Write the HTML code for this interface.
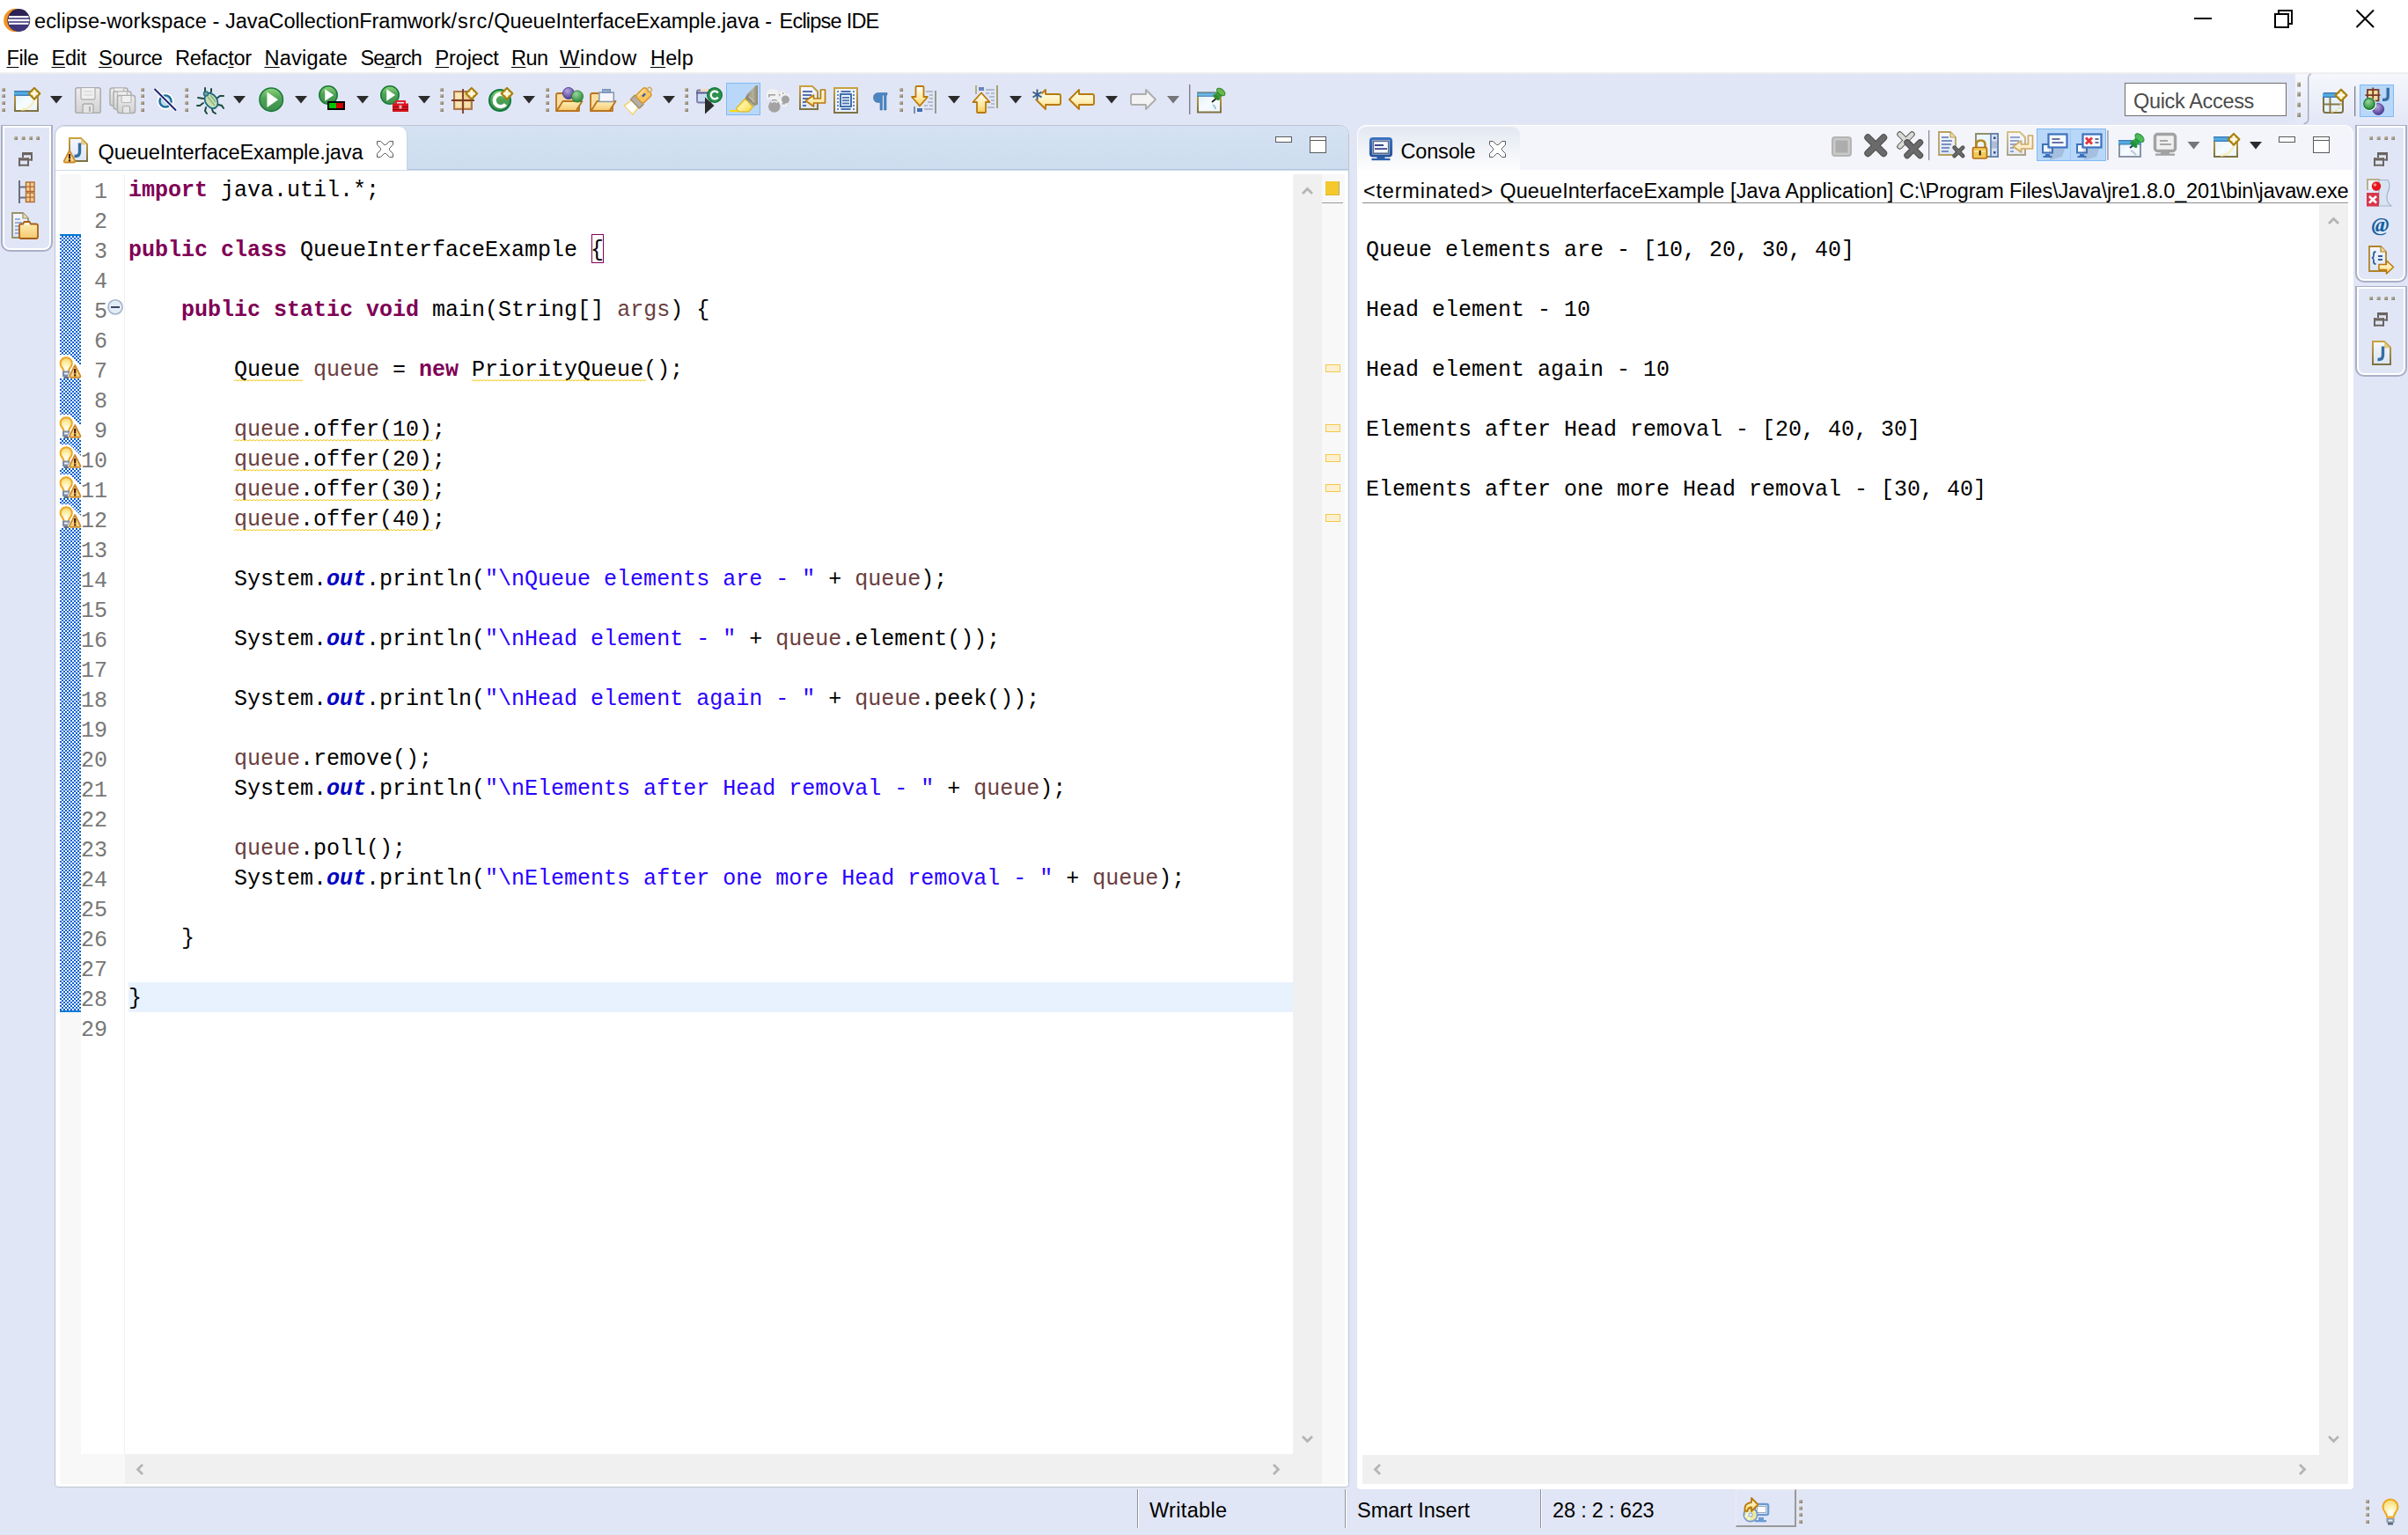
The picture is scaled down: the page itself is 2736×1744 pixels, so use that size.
<!DOCTYPE html>
<html><head><meta charset="utf-8"><title>Eclipse IDE</title><style>
html,body{margin:0;padding:0}
html{overflow:hidden;width:2736px;height:1744px}
body{width:2736px;height:1744px;overflow:hidden;position:relative;background:#E1E6F6;font-family:"Liberation Sans",sans-serif}
.t{position:absolute;white-space:pre;font-family:"Liberation Sans",sans-serif}
.b{position:absolute;box-sizing:border-box}
.m{position:absolute;white-space:pre;font-family:"Liberation Mono",monospace;font-size:25px;line-height:34px}
.k{color:#7F0055;font-weight:bold}
.s{color:#2A00FF}
.v{color:#6A3E3E}
.o{color:#0000C0;font-weight:bold;font-style:italic}
u{text-decoration:underline;text-underline-offset:1.5px;text-decoration-thickness:1.3px}
</style></head><body>
<div class="b" style="left:0px;top:0px;width:2736px;height:82px;background:#fff;"></div>
<div class="b" style="left:0px;top:82px;width:2736px;height:2px;background:linear-gradient(#f3f3f3,#ececf0);"></div>
<div class="t" style="left:39.00px;top:9.06px;font-size:23.5px;line-height:30px;color:#000;letter-spacing:0.151px;">eclipse-workspace - </div>
<div class="t" style="left:256.00px;top:9.06px;font-size:23.5px;line-height:30px;color:#000;letter-spacing:-0.040px;">JavaCollectionFramwork</div>
<div class="t" style="left:512.40px;top:9.06px;font-size:23.5px;line-height:30px;color:#000;letter-spacing:0.983px;">/src/</div>
<div class="t" style="left:561.30px;top:9.06px;font-size:23.5px;line-height:30px;color:#000;letter-spacing:-0.059px;">QueueInterfaceExample.java </div>
<div class="t" style="left:869.30px;top:9.06px;font-size:23.5px;line-height:30px;color:#000;letter-spacing:1.073px;">- </div>
<div class="t" style="left:885.50px;top:9.06px;font-size:23.5px;line-height:30px;color:#000;letter-spacing:-0.769px;">Eclipse IDE</div>
<div class="t" style="left:7.50px;top:51.06px;font-size:23.5px;line-height:30px;color:#000;letter-spacing:-0.417px;"><u>F</u>ile</div>
<div class="t" style="left:58.50px;top:51.06px;font-size:23.5px;line-height:30px;color:#000;letter-spacing:-0.248px;"><u>E</u>dit</div>
<div class="t" style="left:112.00px;top:51.06px;font-size:23.5px;line-height:30px;color:#000;letter-spacing:-0.310px;"><u>S</u>ource</div>
<div class="t" style="left:199.00px;top:51.06px;font-size:23.5px;line-height:30px;color:#000;letter-spacing:-0.239px;">Refac<u>t</u>or</div>
<div class="t" style="left:300.50px;top:51.06px;font-size:23.5px;line-height:30px;color:#000;letter-spacing:0.231px;"><u>N</u>avigate</div>
<div class="t" style="left:409.50px;top:51.06px;font-size:23.5px;line-height:30px;color:#000;letter-spacing:-0.810px;">Se<u>a</u>rch</div>
<div class="t" style="left:494.50px;top:51.06px;font-size:23.5px;line-height:30px;color:#000;letter-spacing:-0.134px;"><u>P</u>roject</div>
<div class="t" style="left:581.00px;top:51.06px;font-size:23.5px;line-height:30px;color:#000;letter-spacing:-0.570px;"><u>R</u>un</div>
<div class="t" style="left:636.00px;top:51.06px;font-size:23.5px;line-height:30px;color:#000;letter-spacing:0.736px;"><u>W</u>indow</div>
<div class="t" style="left:739.00px;top:51.06px;font-size:23.5px;line-height:30px;color:#000;letter-spacing:0.142px;"><u>H</u>elp</div>
<div class="b" style="left:2608px;top:84px;width:128px;height:58px;background:linear-gradient(#F5F7FC,#E3E7F6);"></div>
<div class="b" style="left:2414px;top:94px;width:184px;height:38px;background:#fff;border:1px solid #6E6E6E"></div>
<div class="t" style="left:2424.00px;top:100.06px;font-size:23.5px;line-height:30px;color:#4B4B4B;letter-spacing:-0.337px;">Quick Access</div>
<div class="b" style="left:2681px;top:96px;width:39px;height:37px;background:#B9D7F8;border:1px solid #7FBAF5"></div>
<div class="b" style="left:1px;top:142px;width:59px;height:144px;background:#E1E6F6;border:2px solid #A9AFC6;border-top-width:1px;border-radius:0 0 10px 10px;box-shadow:inset 0 0 0 2px #fff"></div>
<div class="b" style="left:2676px;top:142px;width:59px;height:179px;background:#E1E6F6;border:2px solid #A9AFC6;border-top-width:1px;border-radius:0 0 10px 10px;box-shadow:inset 0 0 0 2px #fff"></div>
<div class="b" style="left:2676px;top:325px;width:59px;height:103px;background:#E1E6F6;border:2px solid #A9AFC6;border-top-width:1px;border-radius:0 0 10px 10px;box-shadow:inset 0 0 0 2px #fff"></div>
<div class="b" style="left:62px;top:142px;width:1471px;height:1548px;background:#fff;border:1px solid #BFC4D0;border-radius:11px 11px 4px 4px"></div>
<div class="b" style="left:63px;top:143px;width:1469px;height:50px;background:linear-gradient(#D4E2F3,#CDDCEE);border-radius:10px 10px 0 0;border-bottom:1px solid #B3C3DA"></div>
<div class="b" style="left:63px;top:144px;width:400px;height:50px;background:#fff;border-radius:10px 9px 0 0;border-right:1px solid #C9D3E2"></div>
<div class="b" style="left:63px;top:193px;width:1469px;height:1px;background:#CDDBEC;"></div>
<div class="t" style="left:111.50px;top:158.06px;font-size:23.5px;line-height:30px;color:#000;letter-spacing:-0.080px;">QueueInterfaceExample.java</div>
<div class="b" style="left:1449px;top:155px;width:19px;height:7px;background:#fff;border:1px solid #5A5A5A"></div>
<div class="b" style="left:1488px;top:155px;width:19px;height:19px;background:#fff;border:1px solid #5A5A5A"></div>
<div class="b" style="left:1488px;top:159px;width:19px;height:1px;background:#5A5A5A;"></div>
<div class="b" style="left:68px;top:198px;width:24px;height:1488px;background:#F8F8F8;"></div>
<div class="b" style="left:92px;top:1652px;width:50px;height:34px;background:#F8F8F8;"></div>
<div class="b" style="left:141px;top:198px;width:1px;height:1454px;background:#F0F0F0;"></div>
<div class="b" style="left:146px;top:1116px;width:1323px;height:34px;background:#E8F2FE;"></div>
<div class="b" style="left:1469px;top:198px;width:33px;height:1488px;background:#F0F0F0;"></div>
<div class="b" style="left:142px;top:1652px;width:1327px;height:34px;background:#F0F0F0;"></div>
<div class="b" style="left:1502px;top:198px;width:26px;height:1488px;background:#F8F8F8;"></div>
<div class="b" style="left:1506px;top:206px;width:16px;height:16px;background:#F5C92D;border-right:1px solid #B9A66A;border-bottom:1px solid #E0B52A"></div>
<div class="b" style="left:1502px;top:230px;width:24px;height:1px;background:#9A9A9A;"></div>
<div class="b" style="left:1506px;top:414px;width:17px;height:9px;background:#FDF0D0;border:1px solid #F4C84A"></div>
<div class="b" style="left:1506px;top:482px;width:17px;height:9px;background:#FDF0D0;border:1px solid #F4C84A"></div>
<div class="b" style="left:1506px;top:516px;width:17px;height:9px;background:#FDF0D0;border:1px solid #F4C84A"></div>
<div class="b" style="left:1506px;top:550px;width:17px;height:9px;background:#FDF0D0;border:1px solid #F4C84A"></div>
<div class="b" style="left:1506px;top:584px;width:17px;height:9px;background:#FDF0D0;border:1px solid #F4C84A"></div>
<div class="b" style="left:1542px;top:142px;width:1132px;height:1550px;background:#fff;border-radius:10px 10px 4px 4px"></div>
<div class="b" style="left:1543px;top:143px;width:1130px;height:50px;background:#F4F5FB;border-radius:9px 9px 0 0"></div>
<div class="b" style="left:1543px;top:144px;width:184px;height:49px;background:linear-gradient(#E3E8F1,#FDFDFE);border-radius:9px 9px 0 0"></div>
<div class="t" style="left:1591.50px;top:157.06px;font-size:23.5px;line-height:30px;color:#000;letter-spacing:-0.174px;">Console</div>
<div class="b" style="left:2314px;top:146px;width:79px;height:37px;background:#B9D7F8;border:1px solid #7FBAF5"></div>
<div class="b" style="left:2352px;top:147px;width:1px;height:35px;background:#9CCBF7;"></div>
<div class="b" style="left:2589px;top:155px;width:19px;height:7px;background:#fff;border:1px solid #5A5A5A"></div>
<div class="b" style="left:2628px;top:155px;width:19px;height:19px;background:#fff;border:1px solid #5A5A5A"></div>
<div class="b" style="left:2628px;top:159px;width:19px;height:1px;background:#5A5A5A;"></div>
<div class="b" style="left:1548px;top:196px;width:1120px;height:36px;overflow:hidden"></div>
<div class="t" style="left:1549.00px;top:201.56px;font-size:23.5px;line-height:30px;color:#000;letter-spacing:0.792px;">&lt;terminated&gt; </div>
<div class="t" style="left:1704.30px;top:201.56px;font-size:23.5px;line-height:30px;color:#000;letter-spacing:0.079px;">QueueInterfaceExample </div>
<div class="t" style="left:1966.00px;top:201.56px;font-size:23.5px;line-height:30px;color:#000;letter-spacing:0.136px;">[Java Application] </div>
<div class="t" style="left:2158.00px;top:201.56px;font-size:23.5px;line-height:30px;color:#000;letter-spacing:-0.141px;width:510px;overflow:hidden;">C:\Program Files\Java\jre1.8.0_201\bin\javaw.exe</div>
<div class="b" style="left:1548px;top:230px;width:1120px;height:1px;background:#8A8A8A;"></div>
<div class="b" style="left:2635px;top:232px;width:33px;height:1454px;background:#F0F0F0;"></div>
<div class="b" style="left:1548px;top:1653px;width:1120px;height:33px;background:#F0F0F0;"></div>
<div class="b" style="left:1292px;top:1692px;width:1px;height:44px;background:#8E929E;"></div>
<div class="b" style="left:1293px;top:1692px;width:1px;height:44px;background:#fff;"></div>
<div class="b" style="left:1528px;top:1692px;width:1px;height:44px;background:#8E929E;"></div>
<div class="b" style="left:1529px;top:1692px;width:1px;height:44px;background:#fff;"></div>
<div class="b" style="left:1750px;top:1692px;width:1px;height:44px;background:#8E929E;"></div>
<div class="b" style="left:1751px;top:1692px;width:1px;height:44px;background:#fff;"></div>
<div class="t" style="left:1306.00px;top:1701.06px;font-size:23.5px;line-height:30px;color:#000;letter-spacing:0.342px;">Writable</div>
<div class="t" style="left:1542.00px;top:1701.06px;font-size:23.5px;line-height:30px;color:#000;letter-spacing:0.002px;">Smart Insert</div>
<div class="t" style="left:1764.00px;top:1701.06px;font-size:23.5px;line-height:30px;color:#000;letter-spacing:-0.174px;">28 : 2 : 623</div>
<div class="b" style="left:1972px;top:1692px;width:69px;height:43px;background:transparent;border-right:2px solid #9A9A9A;border-bottom:2px solid #9A9A9A;border-left:1px solid #ECECEC;border-top:1px solid #ECECEC"></div>
<div class="m" style="left:146px;top:200px;color:#000"><span class="k">import</span> java.util.*;

<span class="k">public</span> <span class="k">class</span> QueueInterfaceExample {

    <span class="k">public</span> <span class="k">static</span> <span class="k">void</span> main(String[] <span class="v">args</span>) {

        Queue <span class="v">queue</span> = <span class="k">new</span> PriorityQueue();

        <span class="v">queue</span>.offer(10);
        <span class="v">queue</span>.offer(20);
        <span class="v">queue</span>.offer(30);
        <span class="v">queue</span>.offer(40);

        System.<span class="o">out</span>.println(<span class="s">"\nQueue elements are - "</span> + <span class="v">queue</span>);

        System.<span class="o">out</span>.println(<span class="s">"\nHead element - "</span> + <span class="v">queue</span>.element());

        System.<span class="o">out</span>.println(<span class="s">"\nHead element again - "</span> + <span class="v">queue</span>.peek());

        <span class="v">queue</span>.remove();
        System.<span class="o">out</span>.println(<span class="s">"\nElements after Head removal - "</span> + <span class="v">queue</span>);

        <span class="v">queue</span>.poll();
        System.<span class="o">out</span>.println(<span class="s">"\nElements after one more Head removal - "</span> + <span class="v">queue</span>);

    }

}
</div>
<div class="m" style="left:92px;top:202px;color:#787878"> 1
 2
 3
 4
 5
 6
 7
 8
 9
10
11
12
13
14
15
16
17
18
19
20
21
22
23
24
25
26
27
28
29</div>
<div class="b" style="left:672px;top:266px;width:14px;height:33px;background:transparent;border:1px solid #7F0055"></div>
<div class="m" style="left:1552px;top:268px;color:#000">Queue elements are - [10, 20, 30, 40]

Head element - 10

Head element again - 10

Elements after Head removal - [20, 40, 30]

Elements after one more Head removal - [30, 40]</div>
<svg width="2736" height="1744" viewBox="0 0 2736 1744" style="position:absolute;left:0;top:0">
<defs>
<pattern id="chk" x="0" y="0" width="4" height="4" patternUnits="userSpaceOnUse"><rect width="4" height="4" fill="#fff"/><rect x="2" y="0" width="2" height="2" fill="#0560D4"/><rect x="0" y="2" width="2" height="2" fill="#0560D4"/></pattern>
<linearGradient id="gDot" x1="0" y1="0" x2="1" y2="1"><stop offset="0" stop-color="#D6CFC0"/><stop offset="1" stop-color="#76705A"/></linearGradient>
<linearGradient id="gGold" x1="0" y1="0" x2="0" y2="1"><stop offset="0" stop-color="#C9A23C"/><stop offset="1" stop-color="#7D7244"/></linearGradient>
<linearGradient id="gWin" x1="0" y1="0" x2="1" y2="1"><stop offset="0" stop-color="#DDEEFB"/><stop offset="0.5" stop-color="#F6FCFF"/><stop offset="1" stop-color="#EAF6FB"/></linearGradient>
<linearGradient id="gGreen" x1="0" y1="0" x2="0" y2="1"><stop offset="0" stop-color="#8FD47A"/><stop offset="0.45" stop-color="#4FA356"/><stop offset="1" stop-color="#3E8E4C"/></linearGradient>
<linearGradient id="gArrow" x1="0" y1="0" x2="0" y2="1"><stop offset="0" stop-color="#FFFDF0"/><stop offset="0.5" stop-color="#FFF3C4"/><stop offset="1" stop-color="#FBD77C"/></linearGradient>
<linearGradient id="gArrowV" x1="0" y1="0" x2="0" y2="1"><stop offset="0" stop-color="#FFFFFF"/><stop offset="0.6" stop-color="#FFE9A0"/><stop offset="1" stop-color="#F9CB5A"/></linearGradient>
<linearGradient id="gFolder" x1="0" y1="0" x2="0" y2="1"><stop offset="0" stop-color="#FFF0B8"/><stop offset="1" stop-color="#F5C86E"/></linearGradient>
<linearGradient id="gSave" x1="0" y1="0" x2="0" y2="1"><stop offset="0" stop-color="#EDEDED"/><stop offset="1" stop-color="#D2D2D2"/></linearGradient>
<linearGradient id="gDoc" x1="0" y1="0" x2="0" y2="1"><stop offset="0" stop-color="#F6F8FD"/><stop offset="1" stop-color="#DBE5F4"/></linearGradient>
<radialGradient id="gPurple" cx="0.4" cy="0.3" r="0.7"><stop offset="0" stop-color="#B7A7DB"/><stop offset="1" stop-color="#4C3A97"/></radialGradient>
<radialGradient id="gGball" cx="0.4" cy="0.3" r="0.7"><stop offset="0" stop-color="#9AD69A"/><stop offset="1" stop-color="#2B8A3C"/></radialGradient>
<radialGradient id="gBulb" cx="0.5" cy="0.75" r="0.7"><stop offset="0" stop-color="#FFFFFF"/><stop offset="0.6" stop-color="#FCEFA6"/><stop offset="1" stop-color="#F6D878"/></radialGradient>
<linearGradient id="gWarn" x1="0" y1="0" x2="0" y2="1"><stop offset="0" stop-color="#FBE7A8"/><stop offset="1" stop-color="#F4CE74"/></linearGradient>
<linearGradient id="gMon" x1="0" y1="0" x2="0" y2="1"><stop offset="0" stop-color="#3A72C0"/><stop offset="1" stop-color="#27559C"/></linearGradient>
<linearGradient id="gTitle" x1="0" y1="0" x2="0" y2="1"><stop offset="0" stop-color="#3B6FA8"/><stop offset="0.5" stop-color="#58BBEE"/><stop offset="1" stop-color="#3B74B0"/></linearGradient>
<linearGradient id="gPkg" x1="0" y1="0" x2="1" y2="1"><stop offset="0" stop-color="#F8E4B0"/><stop offset="1" stop-color="#E2B878"/></linearGradient>
</defs>
<rect x="68" y="266" width="24" height="884" fill="url(#chk)" shape-rendering="crispEdges"/>
<rect x="68" y="266" width="24" height="2" fill="#0078D7"/><rect x="68" y="1148" width="24" height="2" fill="#0078D7"/>
<rect x="2" y="100" width="4" height="4" fill="url(#gDot)"/>
<rect x="2" y="107" width="4" height="4" fill="url(#gDot)"/>
<rect x="2" y="115" width="4" height="4" fill="url(#gDot)"/>
<rect x="2" y="123" width="4" height="4" fill="url(#gDot)"/>
<rect x="17" y="104" width="26" height="22" fill="url(#gWin)" stroke="url(#gGold)" stroke-width="2"/>
<path d="M24 125Q38 123 39 111" stroke="#FBE6A0" stroke-width="2.5" fill="none" opacity="0.65"/>
<rect x="16" y="103" width="28" height="6" fill="url(#gTitle)"/>
<path d="M39 100l6.3 6.3l-6.3 6.3l-6.3 -6.3z" fill="#F3D98E" stroke="#A8800F" stroke-width="2.2" stroke-linejoin="round"/>
<path d="M39 102.3v8M35 106.3h8" stroke="#FFF9E8" stroke-width="2.2" fill="none"/>
<path d="M57 109h14l-7 8.5z" fill="#2B2B2B"/>
<path d="M87.8 99.8h24.4q2 0 2 2v24.4q0 2 -2 2h-24.4q-2 0 -2 -2v-24.4q0 -2 2 -2z" fill="url(#gSave)" stroke="#ADADAD" stroke-width="1.6"/>
<path d="M92 100v11q0 2 2 2h12q2 0 2 -2v-11" fill="#F0F0F0" stroke="#B5B5B5" stroke-width="1.4"/>
<path d="M95 104h10M95 108h10" stroke="#D0D0D0" stroke-width="1.2"/>
<path d="M94 128v-8q0 -2 2 -2h8q2 0 2 2v8" fill="#E4E4E4" stroke="#ADADAD" stroke-width="1.4"/>
<rect x="101" y="121" width="2" height="6" fill="#B0B0B0"/>
<rect x="125" y="100" width="20" height="20" rx="2.5" fill="url(#gSave)" stroke="#ADADAD" stroke-width="1.5"/>
<path d="M129.5 100.5v6q0 1.5 1.5 1.5h8q1.5 0 1.5 -1.5v-6" fill="#F0F0F0" stroke="#B8B8B8" stroke-width="1.2"/>
<path d="M131 119.5v-6q0 -1.5 1.5 -1.5h5q1.5 0 1.5 1.5v6" fill="#E6E6E6" stroke="#ADADAD" stroke-width="1.2"/>
<rect x="129" y="104" width="20" height="20" rx="2.5" fill="url(#gSave)" stroke="#ADADAD" stroke-width="1.5"/>
<path d="M133.5 104.5v6q0 1.5 1.5 1.5h8q1.5 0 1.5 -1.5v-6" fill="#F0F0F0" stroke="#B8B8B8" stroke-width="1.2"/>
<path d="M135 123.5v-6q0 -1.5 1.5 -1.5h5q1.5 0 1.5 1.5v6" fill="#E6E6E6" stroke="#ADADAD" stroke-width="1.2"/>
<rect x="133.5" y="108.5" width="20" height="20" rx="2.5" fill="url(#gSave)" stroke="#ADADAD" stroke-width="1.5"/>
<path d="M138 109v6q0 1.5 1.5 1.5h8q1.5 0 1.5 -1.5v-6" fill="#F0F0F0" stroke="#B8B8B8" stroke-width="1.2"/>
<path d="M139.5 128v-6q0 -1.5 1.5 -1.5h5q1.5 0 1.5 1.5v6" fill="#E6E6E6" stroke="#ADADAD" stroke-width="1.2"/>
<rect x="160" y="100" width="4" height="4" fill="url(#gDot)"/>
<rect x="160" y="107" width="4" height="4" fill="url(#gDot)"/>
<rect x="160" y="115" width="4" height="4" fill="url(#gDot)"/>
<rect x="160" y="123" width="4" height="4" fill="url(#gDot)"/>
<circle cx="188" cy="115" r="9.5" fill="#fff"/>
<circle cx="188" cy="115" r="6.6" fill="#BDD9E9" stroke="#1B6A99" stroke-width="2.4"/>
<path d="M175.5 101L200 125.5" stroke="#fff" stroke-width="4.5"/><path d="M175.5 101L200 125.5" stroke="#1B2373" stroke-width="2"/>
<rect x="210" y="100" width="4" height="4" fill="url(#gDot)"/>
<rect x="210" y="107" width="4" height="4" fill="url(#gDot)"/>
<rect x="210" y="115" width="4" height="4" fill="url(#gDot)"/>
<rect x="210" y="123" width="4" height="4" fill="url(#gDot)"/>
<g stroke="#1D4C3A" stroke-width="2" fill="none" stroke-linecap="round"><path d="M233 108v-8M237 108l3-4v-3M231 112l-6-1M231 117l-4 3h-3M246 112l4-3h4M248 119l4 1l2 3M234 122l-1 4l2 3M241 124l1 3l3 2"/></g>
<ellipse cx="240" cy="114.5" rx="6.6" ry="9.3" transform="rotate(-32 240 114.5)" fill="#C6DDB4" stroke="#1E6782" stroke-width="1.8"/>
<path d="M236 110l8 10M239 108l6 8" stroke="#8DB87E" stroke-width="1.6"/>
<circle cx="234" cy="106.5" r="2.6" fill="#6FA08E" stroke="#1E6782" stroke-width="1.2"/>
<path d="M265 109h14l-7 8.5z" fill="#2B2B2B"/>
<circle cx="308.2" cy="113.2" r="13.2" fill="url(#gGreen)" stroke="#177A3A" stroke-width="1.6"/>
<path d="M303.426 104.52v17.36l12.586 -8.68z" fill="#fff"/>
<path d="M335 109h14l-7 8.5z" fill="#2B2B2B"/>
<circle cx="373" cy="108" r="10.2" fill="url(#gGreen)" stroke="#177A3A" stroke-width="1.6"/>
<path d="M369.249 101.18v13.64l9.889 -6.82z" fill="#fff"/>
<rect x="372" y="115" width="20" height="10" fill="#000"/><rect x="374" y="117" width="8" height="6" fill="#00C400"/><rect x="382" y="117" width="8" height="6" fill="#D00000"/>
<path d="M405 109h14l-7 8.5z" fill="#2B2B2B"/>
<circle cx="443" cy="108" r="10.2" fill="url(#gGreen)" stroke="#177A3A" stroke-width="1.6"/>
<path d="M439.249 101.18v13.64l9.889 -6.82z" fill="#fff"/>
<path d="M450 118v-3h10v3" fill="none" stroke="#E0202A" stroke-width="2"/><rect x="446" y="117.5" width="18" height="9.5" fill="#D9141E"/><path d="M446 121.5h18M446 124.5h18" stroke="#8E0C12" stroke-width="1"/><rect x="453.5" y="119.5" width="3" height="4" fill="#F7B0B0"/>
<path d="M475 109h14l-7 8.5z" fill="#2B2B2B"/>
<rect x="500" y="100" width="4" height="4" fill="url(#gDot)"/>
<rect x="500" y="107" width="4" height="4" fill="url(#gDot)"/>
<rect x="500" y="115" width="4" height="4" fill="url(#gDot)"/>
<rect x="500" y="123" width="4" height="4" fill="url(#gDot)"/>
<rect x="516" y="104" width="20" height="20" fill="url(#gPkg)" stroke="#B0784C" stroke-width="2"/>
<path d="M526 101v28M513 114h26" stroke="#7A3A20" stroke-width="1.8"/>
<path d="M518 106h6v6h-6zM528 116h6v6h-6zM518 116h6v6h-6z" fill="#FBECC0" opacity="0.7"/>
<path d="M535.8 100l6.3 6.3l-6.3 6.3l-6.3 -6.3z" fill="#F3D98E" stroke="#A8800F" stroke-width="2.2" stroke-linejoin="round"/>
<path d="M535.8 102.3v8M531.8 106.3h8" stroke="#FFF9E8" stroke-width="2.2" fill="none"/>
<circle cx="568" cy="114" r="12" fill="url(#gGreen)" stroke="#0F7A3C" stroke-width="2"/>
<path d="M574.5 109.5a7.2 7.2 0 1 0 0 9" fill="none" stroke="#fff" stroke-width="4.2"/>
<path d="M576 100l6.3 6.3l-6.3 6.3l-6.3 -6.3z" fill="#F3D98E" stroke="#A8800F" stroke-width="2.2" stroke-linejoin="round"/>
<path d="M576 102.3v8M572 106.3h8" stroke="#FFF9E8" stroke-width="2.2" fill="none"/>
<path d="M594 109h14l-7 8.5z" fill="#2B2B2B"/>
<rect x="620" y="100" width="4" height="4" fill="url(#gDot)"/>
<rect x="620" y="107" width="4" height="4" fill="url(#gDot)"/>
<rect x="620" y="115" width="4" height="4" fill="url(#gDot)"/>
<rect x="620" y="123" width="4" height="4" fill="url(#gDot)"/>
<path d="M632 126v-18q0 -2 2 -2h7l2 3h15v17z" fill="#F9DDA0" stroke="#B8741E" stroke-width="1.8" stroke-linejoin="round"/>
<path d="M632.5 126l7 -11h22l-7 11z" fill="url(#gFolder)" stroke="#B8741E" stroke-width="1.8" stroke-linejoin="round"/>
<circle cx="646" cy="106" r="6.6" fill="url(#gPurple)" stroke="#4A3A94" stroke-width="0.8"/><circle cx="656" cy="109.5" r="6.6" fill="url(#gGball)" stroke="#1E7A34" stroke-width="0.8"/>
<path d="M671 126v-18q0 -2 2 -2h7l2 3h14v17z" fill="#F9DDA0" stroke="#B8741E" stroke-width="1.8" stroke-linejoin="round"/>
<path d="M671.5 126l7 -11h21l-7 11z" fill="url(#gFolder)" stroke="#B8741E" stroke-width="1.8" stroke-linejoin="round"/>
<rect x="680.8" y="105" width="16.5" height="10.5" fill="#F4F6FC" stroke="#8E9AA8" stroke-width="1.6"/><rect x="684.5" y="101.5" width="9" height="4" fill="#8FA8CC" stroke="#7890B4" stroke-width="1"/>
<g transform="rotate(-44 726 113.500)"><path d="M709.500 106.500l11 1.500v11l-11 1.500z" fill="#FFFBE8" stroke="#F4CC60" stroke-width="1.200"/><path d="M710 109l10 1v7l-10 1z" fill="#fff"/><rect x="719.500" y="106.300" width="7" height="14.400" rx="1" fill="#B4AEA8" stroke="#A48C58" stroke-width="1.400"/><rect x="726" y="107.300" width="15" height="12.400" rx="3" fill="#F7C460" stroke="#D8962C" stroke-width="1.400"/><path d="M728 109.500h11" stroke="#FBE0A0" stroke-width="1.600"/><rect x="731.500" y="112.300" width="4.500" height="2.200" fill="#2C5DA8"/><circle cx="742.500" cy="113.500" r="2.600" fill="none" stroke="#D0A860" stroke-width="1.300"/></g>
<path d="M753 109h14l-7 8.5z" fill="#2B2B2B"/>
<rect x="778" y="100" width="4" height="4" fill="url(#gDot)"/>
<rect x="778" y="107" width="4" height="4" fill="url(#gDot)"/>
<rect x="778" y="115" width="4" height="4" fill="url(#gDot)"/>
<rect x="778" y="123" width="4" height="4" fill="url(#gDot)"/>
<rect x="792" y="102.5" width="16" height="14" rx="1.5" fill="#C9DDF2" stroke="#7A78A8" stroke-width="1.8"/><path d="M791 105.5h18" stroke="#5A5A90" stroke-width="2"/><rect x="796" y="101" width="9" height="3" fill="#F7D8C0"/>
<path d="M801 110.5v19l10.5 -9.5z" fill="#2B2B2B"/>
<circle cx="812" cy="108" r="8.3" fill="#2E9150" stroke="#0F7A3C" stroke-width="1.4"/><path d="M815.8 105.5a4.4 4.4 0 1 0 0 5" fill="none" stroke="#fff" stroke-width="2.3"/>
<rect x="825.5" y="94.5" width="38" height="36" fill="#B9D7F8" stroke="#7FBAF5" stroke-width="1"/>
<defs><linearGradient id="gMk" x1="0" y1="0" x2="1" y2="0"><stop offset="0" stop-color="#8C866A"/><stop offset="0.6" stop-color="#B4B09C"/><stop offset="1" stop-color="#8E886E"/></linearGradient><linearGradient id="gMy" x1="0" y1="0" x2="1" y2="1"><stop offset="0" stop-color="#F2CC20"/><stop offset="0.45" stop-color="#FFF2A0"/><stop offset="1" stop-color="#F6D838"/></linearGradient></defs>
<path d="M829 126h12" stroke="#FBD810" stroke-width="2.200"/>
<path d="M846.700 112l8.800 9.500l-5 5.300h-10q-3.500 -0.500 -3.700 -4z" fill="url(#gMy)" stroke="#E2BC20" stroke-width="1.300" stroke-linejoin="round"/>
<path d="M858.900 97h2.100v21.800l-5.100 2.200l-9.200 -9l2.100 -4.800z" fill="url(#gMk)"/>
<path d="M848 109.500l9.500 9.500" stroke="#7C7660" stroke-width="1.400" opacity="0.700"/><path d="M850.500 110.500q3 0 6 5.500" stroke="#C4C0AC" stroke-width="1.600" fill="none" opacity="0.800"/>
<g fill="#F1F1F1"><path d="M871 113v-6q0 -6 6.800 -6t6.800 6v6z"/><circle cx="889" cy="107" r="3.500"/><circle cx="894" cy="110" r="3.500"/><circle cx="886.500" cy="115" r="3.500"/><circle cx="891" cy="118" r="3"/></g>
<g fill="#A3A3A3"><circle cx="879.800" cy="121" r="6.800"/><circle cx="892.500" cy="113" r="4.500"/><rect x="873" y="107" width="8" height="1.600"/><rect x="873" y="107" width="1.600" height="3.500"/><rect x="877" y="113" width="5.500" height="1.600"/><rect x="885" y="107" width="1.600" height="1.600"/><rect x="889" y="105" width="1.600" height="1.600"/><rect x="888.500" y="117" width="3.500" height="1.600"/></g>
<path d="M876.500 116.500q3.300 -2.500 6.600 0" stroke="#F1F1F1" stroke-width="1.600" fill="none"/>
<g opacity="1"><path d="M909 98h14l6 6v20h-20z" fill="url(#gDoc)" stroke="url(#gGold)" stroke-width="2"/><path d="M912 104h11M912 108h10M912 112h8M912 116h4M912 120h4" stroke="#5570AE" stroke-width="1.8"/>
<path d="M932.5 102v10h-8v-4l-9 6.5l9 6.5v-4h13v-15z" fill="url(#gArrow)" stroke="#B87A0C" stroke-width="1.7" stroke-linejoin="round"/></g>
<rect x="948" y="100" width="26" height="28" fill="#EEF2FA" stroke="url(#gGold)" stroke-width="2"/>
<g fill="#4D72B0"><rect x="955.500" y="103" width="11" height="2"/><rect x="955.500" y="123" width="11" height="2"/><rect x="955" y="107" width="12" height="14" fill="none" stroke="#2D64A8" stroke-width="1.800"/><rect x="957" y="110" width="8" height="1.800"/><rect x="957" y="113.300" width="8" height="1.800"/><rect x="957" y="116.600" width="8" height="1.800"/></g>
<g fill="#6E86B8"><rect x="951" y="103" width="2" height="2"/><rect x="951" y="107" width="2" height="2"/><rect x="951" y="111" width="2" height="2"/><rect x="951" y="115" width="2" height="2"/><rect x="951" y="119" width="2" height="2"/><rect x="951" y="123" width="2" height="2"/><rect x="969" y="103" width="2" height="2"/><rect x="969" y="107" width="2" height="2"/><rect x="969" y="111" width="2" height="2"/><rect x="969" y="115" width="2" height="2"/><rect x="969" y="119" width="2" height="2"/><rect x="969" y="123" width="2" height="2"/></g>
<path d="M1008 105.500h-9.500q-6 0 -6 5.500t6 5.500h1.500v8.500h2.500v-17h2v17h2.500v-17h1z" fill="#4C85BF" stroke="#3B74B0" stroke-width="0.600"/>
<rect x="1022" y="100" width="4" height="4" fill="url(#gDot)"/>
<rect x="1022" y="107" width="4" height="4" fill="url(#gDot)"/>
<rect x="1022" y="115" width="4" height="4" fill="url(#gDot)"/>
<rect x="1022" y="123" width="4" height="4" fill="url(#gDot)"/>
<g stroke="#B4BAD0" stroke-width="1.800"><path d="M1052 104h8M1056 108h4M1056 112h4M1054 116h6M1050 120h4M1056 120h4M1050 124h10"/></g>
<rect x="1062" y="103" width="2" height="26" fill="#8FA090"/><rect x="1038" y="121" width="2" height="8" fill="#8090A8"/><rect x="1042" y="123" width="6" height="4" fill="#3F6FB5"/>
<path d="M1041.500 98h7q1 0 1 1v11h4.500l-9 10.500l-9 -10.500h4.500v-11q0 -1 1 -1z" fill="url(#gArrowV)" stroke="#B87A0C" stroke-width="1.800" stroke-linejoin="round"/>
<path d="M1077 109h14l-7 8.5z" fill="#2B2B2B"/>
<g stroke="#B4BAD0" stroke-width="1.800"><path d="M1120 102h10M1120 106h4M1126 106h4M1124 110h6M1126 114h4M1126 118h4M1122 122h8"/></g>
<rect x="1132" y="97" width="2" height="26" fill="#A0A070"/><rect x="1108" y="97" width="2" height="10" fill="#B4B080"/><rect x="1112" y="99" width="6" height="4" fill="#6A86C0"/>
<path d="M1111 128h8q1 0 1 -1v-11h4.500l-9.500 -10.500l-9.500 10.500h4.500v11q0 1 1 1z" fill="url(#gArrowV)" stroke="#B87A0C" stroke-width="1.800" stroke-linejoin="round"/>
<path d="M1147 109h14l-7 8.5z" fill="#2B2B2B"/>
<path d="M1177 113l11 -11v5h15q2 0 2 2v8q0 2 -2 2h-15v5z" fill="url(#gArrow)" stroke="#B87A0C" stroke-width="1.900" stroke-linejoin="round"/>
<circle cx="1178.500" cy="107.500" r="5.500" fill="#F5EDD0" opacity="0.900"/><path d="M1178.500 101.500v12M1173.500 104.500l10 6M1183.500 104.500l-10 6" stroke="#2F5C9A" stroke-width="1.900"/>
<path d="M1215 113l11 -11v5h15q2 0 2 2v8q0 2 -2 2h-15v5z" fill="url(#gArrow)" stroke="#B87A0C" stroke-width="1.900" stroke-linejoin="round"/>
<path d="M1256 109h14l-7 8.5z" fill="#2B2B2B"/>
<path d="M1313 113l-11 -11v5h-15q-2 0 -2 2v8q0 2 2 2h15v5z" fill="#F3F3F3" stroke="#ADADAD" stroke-width="1.900" stroke-linejoin="round"/>
<path d="M1326 109h14l-7 8.5z" fill="#75757A"/>
<rect x="1351" y="96" width="1.400" height="34" fill="#7E818C"/>
<rect x="1361" y="105.500" width="26" height="22" fill="url(#gWin)" stroke="url(#gGold)" stroke-width="2"/><rect x="1360" y="104.500" width="28" height="5.500" fill="url(#gTitle)" opacity="0.850"/>
<path d="M1377 116l6 -5" stroke="#222" stroke-width="1.800"/><path d="M1378 119q3 2 3 5" stroke="#5A98A8" stroke-width="2" opacity="0.500" fill="none"/>
<g transform="rotate(40 1386 106)"><rect x="1382.500" y="106" width="7" height="6" fill="#3F9A30"/><ellipse cx="1386" cy="104" rx="5.500" ry="3.200" fill="#6AB84A" stroke="#1E7A28" stroke-width="1"/><ellipse cx="1386" cy="112" rx="4.500" ry="2" fill="#2F8A2A"/></g>
<circle cx="17.300" cy="23" r="13.200" fill="#F7941E"/><circle cx="21.300" cy="23" r="12.900" fill="#2C2255"/>
<path d="M9.300 27.500a12.900 12.900 0 0 0 24 0z" fill="#443A80" opacity="0.850"/>
<g fill="#fff"><rect x="10" y="18" width="22.500" height="2.200"/><rect x="9" y="22" width="24.500" height="2.300"/><rect x="10" y="26" width="22.500" height="1.800"/></g>
<g fill="#6A609A"><rect x="9.300" y="20.200" width="24" height="1.800"/><rect x="9.300" y="24.300" width="24" height="1.700"/></g>
<rect x="2493" y="20" width="20" height="2" fill="#000"/>
<path d="M2585 16h15v15h-15zM2589 15.500v-3.500h15v15h-3.500" fill="none" stroke="#000" stroke-width="2"/>
<path d="M2677.500 11.500l19.500 19.500M2697 11.500l-19.500 19.500" stroke="#000" stroke-width="2"/>
<rect x="2610" y="93.5" width="4" height="5" fill="url(#gDot)"/>
<rect x="2610" y="104.5" width="4" height="5" fill="url(#gDot)"/>
<rect x="2610" y="116.5" width="4" height="5" fill="url(#gDot)"/>
<rect x="2610" y="128" width="4" height="5" fill="url(#gDot)"/>
<path d="M2626 84q-3.300 1 -3.300 5v46q0 5 -5 5.500" fill="none" stroke="#9CA3BA" stroke-width="1.300"/>
<rect x="2640" y="106" width="22" height="22" rx="2.500" fill="#E6F3FB" stroke="#7D7244" stroke-width="2"/><path d="M2639 111v-3.500q0 -2.500 2.500 -2.500h19q2.500 0 2.500 2.500v3.500z" fill="url(#gTitle)"/><path d="M2647.500 111v17M2640 118.500h22" stroke="#8A7A48" stroke-width="2"/><path d="M2649 127q8 -0.500 11 -9" stroke="#F6D484" stroke-width="2" fill="none" stroke-dasharray="2 2.500"/>
<path d="M2660 101.7l6.5 6.5l-6.5 6.5l-6.5 -6.5z" fill="#F3D98E" stroke="#A8800F" stroke-width="2.2" stroke-linejoin="round"/>
<path d="M2660 104.2v8M2656 108.2h8" stroke="#FFF9E8" stroke-width="2.2" fill="none"/>
<rect x="2675" y="98" width="1.300" height="34" fill="#7E828E"/>
<rect x="2690" y="102" width="12.500" height="12.500" fill="#F3DCA0" stroke="#7A3A24" stroke-width="1.800"/><path d="M2696.200 99.500v16M2687.500 108.200h17" stroke="#7A3A24" stroke-width="1.800"/>
<path d="M2713.200 99.700v9.500q0 4.200 -4.200 4.200h-2" fill="none" stroke="#356EA0" stroke-width="3.400"/>
<circle cx="2702.200" cy="124" r="6.500" fill="url(#gPurple)" stroke="#4A3A94" stroke-width="0.800"/><circle cx="2692.500" cy="118.500" r="7.600" fill="#fff"/><circle cx="2692" cy="118" r="6.300" fill="url(#gGball)" stroke="#117A30" stroke-width="1.200"/>
<rect x="16" y="155" width="4" height="4" fill="url(#gDot)"/>
<rect x="24.5" y="155" width="4" height="4" fill="url(#gDot)"/>
<rect x="33" y="155" width="4" height="4" fill="url(#gDot)"/>
<rect x="41" y="155" width="4" height="4" fill="url(#gDot)"/>
<g fill="#6B6561"><rect x="25" y="173" width="12" height="3.200"/><rect x="35" y="173" width="2" height="9.500"/><rect x="25" y="173" width="2" height="6"/><rect x="33" y="180.5" width="4" height="2"/>
<rect x="21" y="179.3" width="12" height="3.200"/><rect x="21" y="179.3" width="2" height="9.400"/><rect x="31" y="179.3" width="2" height="9.400"/><rect x="21" y="186.7" width="12" height="2"/></g>
<path d="M22 205v26M22 212.500h8M22 224.500h8" stroke="#69707E" stroke-width="2"/>
<rect x="29.500" y="207" width="9.500" height="10.500" fill="#F0CE96" stroke="#B2682C" stroke-width="1.400"/><path d="M34.200 207v10.500M29.500 212.2h9.500" stroke="#B2682C" stroke-width="1.300"/>
<rect x="29.500" y="219" width="9.500" height="10.500" fill="#F0CE96" stroke="#B2682C" stroke-width="1.400"/><path d="M34.200 219v10.500M29.500 224.2h9.500" stroke="#B2682C" stroke-width="1.300"/>
<path d="M14 242h12l6 6v22h-18z" fill="url(#gDoc)" stroke="#98906C" stroke-width="1.800"/><path d="M26 242v6h6" fill="#E8DCA8" stroke="#98906C" stroke-width="1.200"/><path d="M17 249h6M17 253h8M17 257h5M17 261h5M17 265h4" stroke="#7E9ACB" stroke-width="1.700"/>
<path d="M22 269v-12.500q0 -2 2 -2h2l1.500 -2.500h6l1.500 2.500h6q2 0 2 2v12.500q0 2 -2 2h-17q-2 0 -2 -2z" fill="url(#gFolder)" stroke="#A8601C" stroke-width="1.800"/><path d="M28 254.500h5" stroke="#fff" stroke-width="1.500"/>
<rect x="2692" y="155" width="4" height="4" fill="url(#gDot)"/>
<rect x="2700.5" y="155" width="4" height="4" fill="url(#gDot)"/>
<rect x="2709" y="155" width="4" height="4" fill="url(#gDot)"/>
<rect x="2717" y="155" width="4" height="4" fill="url(#gDot)"/>
<g fill="#6B6561"><rect x="2701" y="173" width="12" height="3.200"/><rect x="2711" y="173" width="2" height="9.500"/><rect x="2701" y="173" width="2" height="6"/><rect x="2709" y="180.5" width="4" height="2"/>
<rect x="2697" y="179.3" width="12" height="3.200"/><rect x="2697" y="179.3" width="2" height="9.400"/><rect x="2707" y="179.3" width="2" height="9.400"/><rect x="2697" y="186.7" width="12" height="2"/></g>
<path d="M2690 216v-12h14" fill="none" stroke="#B8B08A" stroke-width="2"/><rect x="2691" y="205" width="12" height="10" fill="#F4F6FA"/>
<path d="M2703 204.500h10q4 6 0 14q-2 6 0 11q2 3 4 4.500h-16q3 -2 2 -8v-12z" fill="#D8E4F0" stroke="#A0B4CC" stroke-width="1.200"/>
<circle cx="2700" cy="211.500" r="5.200" fill="#E8141C"/><circle cx="2698.500" cy="210" r="1.800" fill="#F98"/>
<rect x="2689" y="219" width="14" height="15.500" fill="#D9364A"/><path d="M2692 223l8 7.500M2700 223l-8 7.500" stroke="#fff" stroke-width="2.600"/>
<text x="2694.500" y="262.700" font-family="Liberation Serif, serif" font-weight="bold" font-style="italic" font-size="24" fill="#115E9E">@</text>
<path d="M2692 280h13l6 6v22h-19z" fill="url(#gDoc)" stroke="#B0842C" stroke-width="1.800"/><path d="M2705 280v6h6" fill="#EEDCA0" stroke="#B0842C" stroke-width="1.200"/>
<path d="M2699.500 286q-2.500 0 -2.500 2.500v2q0 2 -2 2.500q2 0.500 2 2.500v2q0 2.500 2.500 2.500" fill="none" stroke="#2F5FA0" stroke-width="1.800"/><path d="M2702 291h5M2702 295h5" stroke="#2F5FA0" stroke-width="1.800"/>
<path d="M2719.500 303.500l-8 -7.500v4.500h-8.500v6h8.500v4.500z" fill="url(#gArrowV)" stroke="#B87A0C" stroke-width="1.600" stroke-linejoin="round"/>
<rect x="2692" y="337" width="4" height="4" fill="url(#gDot)"/>
<rect x="2700.5" y="337" width="4" height="4" fill="url(#gDot)"/>
<rect x="2709" y="337" width="4" height="4" fill="url(#gDot)"/>
<rect x="2717" y="337" width="4" height="4" fill="url(#gDot)"/>
<g fill="#6B6561"><rect x="2701" y="355" width="12" height="3.200"/><rect x="2711" y="355" width="2" height="9.500"/><rect x="2701" y="355" width="2" height="6"/><rect x="2709" y="362.5" width="4" height="2"/>
<rect x="2697" y="361.3" width="12" height="3.200"/><rect x="2697" y="361.3" width="2" height="9.400"/><rect x="2707" y="361.3" width="2" height="9.400"/><rect x="2697" y="368.7" width="12" height="2"/></g>
<path d="M2696 388h13l7 7v19h-20z" fill="url(#gDoc)" stroke="url(#gGold)" stroke-width="2"/><path d="M2709 388.5v7h7z" fill="#E6CC84"/>
<path d="M2707.5 393.5v10q0 5 -5 5h-1" fill="none" stroke="#356EA0" stroke-width="3.400"/>
<path d="M79 157h13l7 7v19h-20z" fill="url(#gDoc)" stroke="url(#gGold)" stroke-width="2"/><path d="M92 157.5v7h7z" fill="#E6CC84"/>
<path d="M90.5 162.5v10q0 5 -5 5h-1" fill="none" stroke="#356EA0" stroke-width="3.400"/>
<path d="M79 172.500l-7.500 12.500h15z" fill="#fff"/>
<path d="M79 171l6 11.3q1 2.200 -1.500 2.200h-9q-2.500 0 -1.500 -2.200z" fill="url(#gWarn)" stroke="#CC8A2C" stroke-width="1.800" stroke-linejoin="round"/>
<rect x="77.9" y="175" width="2.200" height="5.500" fill="#4A1A00"/><rect x="77.9" y="181.3" width="2.200" height="2.200" fill="#4A1A00"/>
<polygon points="428.5,160.5 432.5,160.5 436.5,164.5 438.5,164.5 442.5,160.5 446.5,160.5 446.5,164.5 442.5,168.5 442.5,170.5 446.5,174.5 446.5,178.5 442.5,178.5 438.5,174.5 436.5,174.5 432.5,178.5 428.5,178.5 428.5,174.5 432.5,170.5 432.5,168.5 428.5,164.5" fill="#fff" stroke="#5C5C5C" stroke-width="1"/>
<rect x="1557.500" y="157.500" width="23" height="19.500" rx="2.500" fill="#F3FAFF" stroke="url(#gMon)" stroke-width="3.200"/><rect x="1560.300" y="160.300" width="17.400" height="14" fill="none" stroke="#5A6A8E" stroke-width="1.700"/>
<path d="M1562 165h10M1562 169.200h14" stroke="#3C4684" stroke-width="1.800"/><rect x="1564.500" y="178" width="9" height="2.500" fill="#2C5EA8"/><rect x="1558.500" y="180" width="21" height="2.200" fill="#2C5EA8"/>
<polygon points="1692.5,160.5 1696.5,160.5 1700.5,164.5 1702.5,164.5 1706.5,160.5 1710.5,160.5 1710.5,164.5 1706.5,168.5 1706.5,170.5 1710.5,174.5 1710.5,178.5 1706.5,178.5 1702.5,174.5 1700.5,174.5 1696.5,178.5 1692.5,178.5 1692.5,174.5 1696.5,170.5 1696.5,168.5 1692.5,164.5" fill="#fff" stroke="#5C5C5C" stroke-width="1"/>
<rect x="2082" y="156" width="21" height="21" rx="3" fill="#C9C9C9" stroke="#B4B4B4" stroke-width="2"/><rect x="2085.500" y="159.500" width="14" height="14" fill="#ADADAD"/>
<path d="M2122.3 156.3L2140.2 174.2M2140.2 156.3L2122.3 174.2" stroke="#4E4E4E" stroke-width="8" stroke-linecap="round" fill="none"/><path d="M2122.3 156.3L2140.2 174.2M2140.2 156.3L2122.3 174.2" stroke="#6A6A6A" stroke-width="6" stroke-linecap="round" fill="none"/>
<path d="M2158.55 152.55L2172.45 166.45M2172.45 152.55L2158.55 166.45" stroke="#5A5A52" stroke-width="6.5" stroke-linecap="round" fill="none"/><path d="M2158.55 152.55L2172.45 166.45M2172.45 152.55L2158.55 166.45" stroke="#DADADA" stroke-width="4.5" stroke-linecap="round" fill="none"/>
<path d="M2166.9 161.9L2181.6 176.6M2181.6 161.9L2166.9 176.6" stroke="#4E4E4E" stroke-width="7.2" stroke-linecap="round" fill="none"/><path d="M2166.9 161.9L2181.6 176.6M2181.6 161.9L2166.9 176.6" stroke="#6A6A6A" stroke-width="5.2" stroke-linecap="round" fill="none"/>
<rect x="2191" y="148" width="1.300" height="34" fill="#8A8E9A"/>
<path d="M2203 150h13l6 6v20h-19z" fill="url(#gDoc)" stroke="#B8A060" stroke-width="1.800"/><path d="M2216 150v6h6" fill="#EEDCA0" stroke="#B8A060" stroke-width="1.200"/><path d="M2206 156h8M2206 160h12M2206 164h11M2206 168h9M2206 172h8" stroke="#5570AE" stroke-width="1.700"/>
<path d="M2220.6 167.6L2230.2 177.2M2230.2 167.6L2220.6 177.2" stroke="#4E4E4E" stroke-width="4.6" stroke-linecap="round" fill="none"/><path d="M2220.6 167.6L2230.2 177.2M2230.2 167.6L2220.6 177.2" stroke="#6A6A6A" stroke-width="2.6" stroke-linecap="round" fill="none"/>
<rect x="2245" y="152" width="25" height="26" fill="#EAF6FD" stroke="#8A8460" stroke-width="1.800"/><rect x="2262" y="152" width="8" height="26" fill="#D4E0F0" stroke="#5C7CB0" stroke-width="1.600"/><rect x="2265" y="155.500" width="2.500" height="2.500" fill="#2D4C90"/><rect x="2265" y="172" width="2.500" height="2.500" fill="#2D4C90"/><rect x="2263" y="160.500" width="6" height="8" fill="#B0BCD4"/>
<path d="M2245.500 168v-3.500q0 -5 5 -5t5 5v3.500" fill="none" stroke="#B8861C" stroke-width="2.600"/><rect x="2241.500" y="167.500" width="16" height="12.500" rx="1.500" fill="#F2C95A" stroke="#B06A10" stroke-width="1.600"/><path d="M2243 172h13" stroke="#FBE9A8" stroke-width="1.500"/><rect x="2248.700" y="171" width="2" height="5.500" fill="#3A2000"/>
<g opacity="0.62"><path d="M2281 150h14l6 6v20h-20z" fill="url(#gDoc)" stroke="url(#gGold)" stroke-width="2"/><path d="M2284 156h11M2284 160h10M2284 164h8M2284 168h4M2284 172h4" stroke="#5570AE" stroke-width="1.8"/>
<path d="M2304.5 154v10h-8v-4l-9 6.5l9 6.5v-4h13v-15z" fill="url(#gArrow)" stroke="#B87A0C" stroke-width="1.7" stroke-linejoin="round"/></g>
<rect x="2321" y="164" width="11" height="9.500" fill="#F2F8FE" stroke="#3C72BC" stroke-width="2"/><rect x="2324" y="175" width="5" height="2.500" fill="#3C72BC"/><rect x="2321.5" y="177" width="10" height="2" fill="#3C72BC"/>
<path d="M2328 169l18 0l-3 9l-14 4z" fill="#5A6C88" opacity="0.220"/>
<rect x="2327.5" y="152.5" width="21" height="15" fill="#F4FAFF" stroke="#3C72BC" stroke-width="2.200"/>
<path d="M2331.5 158h9M2331.5 162h13" stroke="#3C4684" stroke-width="1.700"/>
<rect x="2360" y="164" width="11" height="9.500" fill="#F2F8FE" stroke="#3C72BC" stroke-width="2"/><rect x="2363" y="175" width="5" height="2.500" fill="#3C72BC"/><rect x="2360.5" y="177" width="10" height="2" fill="#3C72BC"/>
<path d="M2367 169l18 0l-3 9l-14 4z" fill="#5A6C88" opacity="0.220"/>
<rect x="2366.5" y="152.5" width="21" height="15" fill="#F4FAFF" stroke="#3C72BC" stroke-width="2.200"/>
<path d="M2370 156.5l7 7M2377 156.5l-7 7" stroke="#E2343C" stroke-width="3"/><path d="M2380.5 158h4M2380.5 162h4" stroke="#3C4684" stroke-width="1.600"/>
<rect x="2394.300" y="148" width="1.300" height="34" fill="#8A8E9A"/>
<rect x="2408" y="160" width="24" height="18" fill="url(#gWin)" stroke="#8C94A4" stroke-width="2"/><rect x="2407" y="159" width="26" height="5.500" fill="url(#gTitle)"/>
<path d="M2420 168l5 -4" stroke="#1C2A70" stroke-width="2"/><path d="M2421 171q4 2 6 5" stroke="#8C98A8" stroke-width="2" opacity="0.500" fill="none"/>
<g transform="rotate(42 2428 160)"><rect x="2424.500" y="158" width="7" height="7" fill="#2FA044"/><ellipse cx="2428" cy="155.500" rx="6" ry="3.500" fill="#4DBB58" stroke="#148A30" stroke-width="1"/><ellipse cx="2428" cy="165.500" rx="5" ry="2.200" fill="#1E9238"/></g>
<rect x="2448.500" y="152.500" width="23" height="19" rx="3" fill="#F0F0F0" stroke="#A2A2A2" stroke-width="3.400"/><path d="M2454 160h9M2454 164h13" stroke="#A8A8A8" stroke-width="1.800"/><rect x="2455" y="172" width="10" height="3" fill="#A2A2A2"/><rect x="2449" y="174.500" width="22" height="2.300" fill="#A2A2A2"/>
<path d="M2485.5 161h14l-7 8.5z" fill="#75757A"/>
<rect x="2516" y="156" width="26" height="22" fill="url(#gWin)" stroke="url(#gGold)" stroke-width="2"/>
<path d="M2523 177Q2537 175 2538 163" stroke="#FBE6A0" stroke-width="2.5" fill="none" opacity="0.65"/>
<rect x="2515" y="155" width="28" height="6" fill="url(#gTitle)"/>
<path d="M2538 152l6.3 6.3l-6.3 6.3l-6.3 -6.3z" fill="#F3D98E" stroke="#A8800F" stroke-width="2.2" stroke-linejoin="round"/>
<path d="M2538 154.3v8M2534 158.3h8" stroke="#FFF9E8" stroke-width="2.2" fill="none"/>
<path d="M2556 161h14l-7 8.5z" fill="#2B2B2B"/>
<path d="M1480 220l5.500 -5.500l5.500 5.500" fill="none" stroke="#B4B4B4" stroke-width="2.800"/>
<path d="M1480 1632l5.500 5.500l5.500 -5.500" fill="none" stroke="#B4B4B4" stroke-width="2.800"/>
<path d="M162 1664l-5.500 5.500l5.500 5.500" fill="none" stroke="#B4B4B4" stroke-width="2.800"/>
<path d="M1447 1664l5.500 5.500l-5.500 5.500" fill="none" stroke="#B4B4B4" stroke-width="2.800"/>
<path d="M2646 254l5.500 -5.500l5.500 5.500" fill="none" stroke="#B4B4B4" stroke-width="2.800"/>
<path d="M2646 1632l5.500 5.500l5.500 -5.500" fill="none" stroke="#B4B4B4" stroke-width="2.800"/>
<path d="M1568 1664l-5.500 5.500l5.500 5.500" fill="none" stroke="#B4B4B4" stroke-width="2.800"/>
<path d="M2613 1664l5.500 5.500l-5.500 5.500" fill="none" stroke="#B4B4B4" stroke-width="2.800"/>
<rect x="2044" y="1704" width="4" height="4" fill="url(#gDot)"/>
<rect x="2044" y="1711.5" width="4" height="4" fill="url(#gDot)"/>
<rect x="2044" y="1719" width="4" height="4" fill="url(#gDot)"/>
<rect x="2044" y="1727" width="4" height="4" fill="url(#gDot)"/>
<rect x="2688" y="1704" width="4" height="4" fill="url(#gDot)"/>
<rect x="2688" y="1711.5" width="4" height="4" fill="url(#gDot)"/>
<rect x="2688" y="1719" width="4" height="4" fill="url(#gDot)"/>
<rect x="2688" y="1727" width="4" height="4" fill="url(#gDot)"/>
<rect x="1994" y="1709" width="15" height="12" rx="2" fill="#fff" stroke="#6C9AD4" stroke-width="2.600"/><rect x="1996.500" y="1711.500" width="10" height="7" fill="none" stroke="#9CA8BC" stroke-width="1"/><rect x="1998" y="1724" width="6" height="3" fill="#6C9AD4"/><rect x="1994" y="1727" width="13" height="2.300" fill="#6C9AD4"/>
<circle cx="1989" cy="1721" r="7.700" fill="#E9EB9C" stroke="#7C9AD0" stroke-width="1.800"/><path d="M1983 1724l4 -6M1986 1727l3 -5" stroke="#fff" stroke-width="2" opacity="0.800"/><circle cx="1989" cy="1721" r="2" fill="#fff" stroke="#A4B4D8" stroke-width="1.300"/>
<path d="M1982.500 1716.500q-1 -9 7.500 -9.500v-5l7.500 7.500l-7.500 7.500v-4.500q-4 0 -4.500 4.500z" fill="url(#gArrowV)" stroke="#B87A0C" stroke-width="1.800" stroke-linejoin="round"/>
<path d="M2709.88 1717.87a8.5 8.5 0 1 1 12.24 0q-2 3 -2.500 6h-7.24q-0.500 -3 -2.500 -6z" fill="url(#gBulb)" stroke="#EDA621" stroke-width="2" stroke-linejoin="round"/>
<rect x="2711.500" y="1725" width="9" height="5" fill="#8A98AC"/><rect x="2713.500" y="1726.500" width="5" height="2" fill="#E8ECF2"/><rect x="2713" y="1730" width="6" height="2.500" fill="#5A6880"/>
<path d="M67 403h12l14 14v13h-26z" fill="#fff"/>
<path d="M70.448 417.354a6.6 6.6 0 1 1 9.504 0q-2 3 -2.500 6h-4.504q-0.500 -3 -2.500 -6z" fill="url(#gBulb)" stroke="#EDA621" stroke-width="2" stroke-linejoin="round"/>
<rect x="71" y="421.5" width="8.500" height="6.500" fill="#7E8DA6"/><rect x="73" y="423.5" width="4.500" height="2" fill="#EEF2F8"/><rect x="72.500" y="428" width="5.500" height="2" fill="#5E6E8A"/>
<path d="M85.200 412.5l-8.500 15.500h17z" fill="#fff"/>
<path d="M85.2 415l5.9 11.6q1 2.200 -1.500 2.200h-8.8q-2.500 0 -1.500 -2.200z" fill="url(#gWarn)" stroke="#CC8A2C" stroke-width="1.800" stroke-linejoin="round"/>
<rect x="84.1" y="419" width="2.200" height="5.500" fill="#4A1A00"/><rect x="84.1" y="425.3" width="2.200" height="2.200" fill="#4A1A00"/>
<path d="M67 471h12l14 14v13h-26z" fill="#fff"/>
<path d="M70.448 485.354a6.6 6.6 0 1 1 9.504 0q-2 3 -2.500 6h-4.504q-0.500 -3 -2.500 -6z" fill="url(#gBulb)" stroke="#EDA621" stroke-width="2" stroke-linejoin="round"/>
<rect x="71" y="489.5" width="8.500" height="6.500" fill="#7E8DA6"/><rect x="73" y="491.5" width="4.500" height="2" fill="#EEF2F8"/><rect x="72.500" y="496" width="5.500" height="2" fill="#5E6E8A"/>
<path d="M85.200 480.5l-8.500 15.500h17z" fill="#fff"/>
<path d="M85.2 483l5.9 11.6q1 2.200 -1.500 2.200h-8.8q-2.500 0 -1.500 -2.200z" fill="url(#gWarn)" stroke="#CC8A2C" stroke-width="1.800" stroke-linejoin="round"/>
<rect x="84.1" y="487" width="2.200" height="5.500" fill="#4A1A00"/><rect x="84.1" y="493.3" width="2.200" height="2.200" fill="#4A1A00"/>
<path d="M67 505h12l14 14v13h-26z" fill="#fff"/>
<path d="M70.448 519.354a6.6 6.6 0 1 1 9.504 0q-2 3 -2.500 6h-4.504q-0.500 -3 -2.500 -6z" fill="url(#gBulb)" stroke="#EDA621" stroke-width="2" stroke-linejoin="round"/>
<rect x="71" y="523.5" width="8.500" height="6.500" fill="#7E8DA6"/><rect x="73" y="525.5" width="4.500" height="2" fill="#EEF2F8"/><rect x="72.500" y="530" width="5.500" height="2" fill="#5E6E8A"/>
<path d="M85.200 514.5l-8.500 15.500h17z" fill="#fff"/>
<path d="M85.2 517l5.9 11.6q1 2.200 -1.500 2.200h-8.8q-2.500 0 -1.500 -2.200z" fill="url(#gWarn)" stroke="#CC8A2C" stroke-width="1.800" stroke-linejoin="round"/>
<rect x="84.1" y="521" width="2.200" height="5.500" fill="#4A1A00"/><rect x="84.1" y="527.3" width="2.200" height="2.200" fill="#4A1A00"/>
<path d="M67 539h12l14 14v13h-26z" fill="#fff"/>
<path d="M70.448 553.354a6.6 6.6 0 1 1 9.504 0q-2 3 -2.500 6h-4.504q-0.500 -3 -2.500 -6z" fill="url(#gBulb)" stroke="#EDA621" stroke-width="2" stroke-linejoin="round"/>
<rect x="71" y="557.5" width="8.500" height="6.500" fill="#7E8DA6"/><rect x="73" y="559.5" width="4.500" height="2" fill="#EEF2F8"/><rect x="72.500" y="564" width="5.500" height="2" fill="#5E6E8A"/>
<path d="M85.200 548.5l-8.500 15.500h17z" fill="#fff"/>
<path d="M85.2 551l5.9 11.6q1 2.200 -1.500 2.200h-8.8q-2.500 0 -1.500 -2.200z" fill="url(#gWarn)" stroke="#CC8A2C" stroke-width="1.800" stroke-linejoin="round"/>
<rect x="84.1" y="555" width="2.200" height="5.500" fill="#4A1A00"/><rect x="84.1" y="561.3" width="2.200" height="2.200" fill="#4A1A00"/>
<path d="M67 573h12l14 14v13h-26z" fill="#fff"/>
<path d="M70.448 587.354a6.6 6.6 0 1 1 9.504 0q-2 3 -2.500 6h-4.504q-0.500 -3 -2.500 -6z" fill="url(#gBulb)" stroke="#EDA621" stroke-width="2" stroke-linejoin="round"/>
<rect x="71" y="591.5" width="8.500" height="6.500" fill="#7E8DA6"/><rect x="73" y="593.5" width="4.500" height="2" fill="#EEF2F8"/><rect x="72.500" y="598" width="5.500" height="2" fill="#5E6E8A"/>
<path d="M85.200 582.5l-8.500 15.500h17z" fill="#fff"/>
<path d="M85.2 585l5.9 11.6q1 2.200 -1.500 2.200h-8.8q-2.500 0 -1.500 -2.200z" fill="url(#gWarn)" stroke="#CC8A2C" stroke-width="1.800" stroke-linejoin="round"/>
<rect x="84.1" y="589" width="2.200" height="5.500" fill="#4A1A00"/><rect x="84.1" y="595.3" width="2.200" height="2.200" fill="#4A1A00"/>
<circle cx="131" cy="348.900" r="8.100" fill="#E2EDF6" stroke="#A3B3C9" stroke-width="1.600"/><rect x="126" y="348" width="10" height="2" fill="#3C4664"/>
<path d="M266 433L268 431.5L270 433L272 431.5L274 433L276 431.5L278 433L280 431.5L282 433L284 431.5L286 433L288 431.5L290 433L292 431.5L294 433L296 431.5L298 433L300 431.5L302 433L304 431.5L306 433L308 431.5L310 433L312 431.5L314 433L316 431.5L318 433L320 431.5L322 433L324 431.5L326 433L328 431.5L330 433L332 431.5L334 433L336 431.5L338 433L340 431.5L342 433L344 431.5" fill="none" stroke="#F2C200" stroke-width="1" opacity="0.900"/>
<path d="M536 433L538 431.5L540 433L542 431.5L544 433L546 431.5L548 433L550 431.5L552 433L554 431.5L556 433L558 431.5L560 433L562 431.5L564 433L566 431.5L568 433L570 431.5L572 433L574 431.5L576 433L578 431.5L580 433L582 431.5L584 433L586 431.5L588 433L590 431.5L592 433L594 431.5L596 433L598 431.5L600 433L602 431.5L604 433L606 431.5L608 433L610 431.5L612 433L614 431.5L616 433L618 431.5L620 433L622 431.5L624 433L626 431.5L628 433L630 431.5L632 433L634 431.5L636 433L638 431.5L640 433L642 431.5L644 433L646 431.5L648 433L650 431.5L652 433L654 431.5L656 433L658 431.5L660 433L662 431.5L664 433L666 431.5L668 433L670 431.5L672 433L674 431.5L676 433L678 431.5L680 433L682 431.5L684 433L686 431.5L688 433L690 431.5L692 433L694 431.5L696 433L698 431.5L700 433L702 431.5L704 433L706 431.5L708 433L710 431.5L712 433L714 431.5L716 433L718 431.5L720 433L722 431.5L724 433L726 431.5L728 433L730 431.5L732 433L734 431.5" fill="none" stroke="#F2C200" stroke-width="1" opacity="0.900"/>
<path d="M266 501L268 499.5L270 501L272 499.5L274 501L276 499.5L278 501L280 499.5L282 501L284 499.5L286 501L288 499.5L290 501L292 499.5L294 501L296 499.5L298 501L300 499.5L302 501L304 499.5L306 501L308 499.5L310 501L312 499.5L314 501L316 499.5L318 501L320 499.5L322 501L324 499.5L326 501L328 499.5L330 501L332 499.5L334 501L336 499.5L338 501L340 499.5L342 501L344 499.5L346 501L348 499.5L350 501L352 499.5L354 501L356 499.5L358 501L360 499.5L362 501L364 499.5L366 501L368 499.5L370 501L372 499.5L374 501L376 499.5L378 501L380 499.5L382 501L384 499.5L386 501L388 499.5L390 501L392 499.5L394 501L396 499.5L398 501L400 499.5L402 501L404 499.5L406 501L408 499.5L410 501L412 499.5L414 501L416 499.5L418 501L420 499.5L422 501L424 499.5L426 501L428 499.5L430 501L432 499.5L434 501L436 499.5L438 501L440 499.5L442 501L444 499.5L446 501L448 499.5L450 501L452 499.5L454 501L456 499.5L458 501L460 499.5L462 501L464 499.5L466 501L468 499.5L470 501L472 499.5L474 501L476 499.5L478 501L480 499.5L482 501L484 499.5L486 501L488 499.5L490 501L492 499.5" fill="none" stroke="#F2C200" stroke-width="1" opacity="0.900"/>
<path d="M266 535L268 533.5L270 535L272 533.5L274 535L276 533.5L278 535L280 533.5L282 535L284 533.5L286 535L288 533.5L290 535L292 533.5L294 535L296 533.5L298 535L300 533.5L302 535L304 533.5L306 535L308 533.5L310 535L312 533.5L314 535L316 533.5L318 535L320 533.5L322 535L324 533.5L326 535L328 533.5L330 535L332 533.5L334 535L336 533.5L338 535L340 533.5L342 535L344 533.5L346 535L348 533.5L350 535L352 533.5L354 535L356 533.5L358 535L360 533.5L362 535L364 533.5L366 535L368 533.5L370 535L372 533.5L374 535L376 533.5L378 535L380 533.5L382 535L384 533.5L386 535L388 533.5L390 535L392 533.5L394 535L396 533.5L398 535L400 533.5L402 535L404 533.5L406 535L408 533.5L410 535L412 533.5L414 535L416 533.5L418 535L420 533.5L422 535L424 533.5L426 535L428 533.5L430 535L432 533.5L434 535L436 533.5L438 535L440 533.5L442 535L444 533.5L446 535L448 533.5L450 535L452 533.5L454 535L456 533.5L458 535L460 533.5L462 535L464 533.5L466 535L468 533.5L470 535L472 533.5L474 535L476 533.5L478 535L480 533.5L482 535L484 533.5L486 535L488 533.5L490 535L492 533.5" fill="none" stroke="#F2C200" stroke-width="1" opacity="0.900"/>
<path d="M266 569L268 567.5L270 569L272 567.5L274 569L276 567.5L278 569L280 567.5L282 569L284 567.5L286 569L288 567.5L290 569L292 567.5L294 569L296 567.5L298 569L300 567.5L302 569L304 567.5L306 569L308 567.5L310 569L312 567.5L314 569L316 567.5L318 569L320 567.5L322 569L324 567.5L326 569L328 567.5L330 569L332 567.5L334 569L336 567.5L338 569L340 567.5L342 569L344 567.5L346 569L348 567.5L350 569L352 567.5L354 569L356 567.5L358 569L360 567.5L362 569L364 567.5L366 569L368 567.5L370 569L372 567.5L374 569L376 567.5L378 569L380 567.5L382 569L384 567.5L386 569L388 567.5L390 569L392 567.5L394 569L396 567.5L398 569L400 567.5L402 569L404 567.5L406 569L408 567.5L410 569L412 567.5L414 569L416 567.5L418 569L420 567.5L422 569L424 567.5L426 569L428 567.5L430 569L432 567.5L434 569L436 567.5L438 569L440 567.5L442 569L444 567.5L446 569L448 567.5L450 569L452 567.5L454 569L456 567.5L458 569L460 567.5L462 569L464 567.5L466 569L468 567.5L470 569L472 567.5L474 569L476 567.5L478 569L480 567.5L482 569L484 567.5L486 569L488 567.5L490 569L492 567.5" fill="none" stroke="#F2C200" stroke-width="1" opacity="0.900"/>
<path d="M266 603L268 601.5L270 603L272 601.5L274 603L276 601.5L278 603L280 601.5L282 603L284 601.5L286 603L288 601.5L290 603L292 601.5L294 603L296 601.5L298 603L300 601.5L302 603L304 601.5L306 603L308 601.5L310 603L312 601.5L314 603L316 601.5L318 603L320 601.5L322 603L324 601.5L326 603L328 601.5L330 603L332 601.5L334 603L336 601.5L338 603L340 601.5L342 603L344 601.5L346 603L348 601.5L350 603L352 601.5L354 603L356 601.5L358 603L360 601.5L362 603L364 601.5L366 603L368 601.5L370 603L372 601.5L374 603L376 601.5L378 603L380 601.5L382 603L384 601.5L386 603L388 601.5L390 603L392 601.5L394 603L396 601.5L398 603L400 601.5L402 603L404 601.5L406 603L408 601.5L410 603L412 601.5L414 603L416 601.5L418 603L420 601.5L422 603L424 601.5L426 603L428 601.5L430 603L432 601.5L434 603L436 601.5L438 603L440 601.5L442 603L444 601.5L446 603L448 601.5L450 603L452 601.5L454 603L456 601.5L458 603L460 601.5L462 603L464 601.5L466 603L468 601.5L470 603L472 601.5L474 603L476 601.5L478 603L480 601.5L482 603L484 601.5L486 603L488 601.5L490 603L492 601.5" fill="none" stroke="#F2C200" stroke-width="1" opacity="0.900"/>
</svg>
</body></html>
